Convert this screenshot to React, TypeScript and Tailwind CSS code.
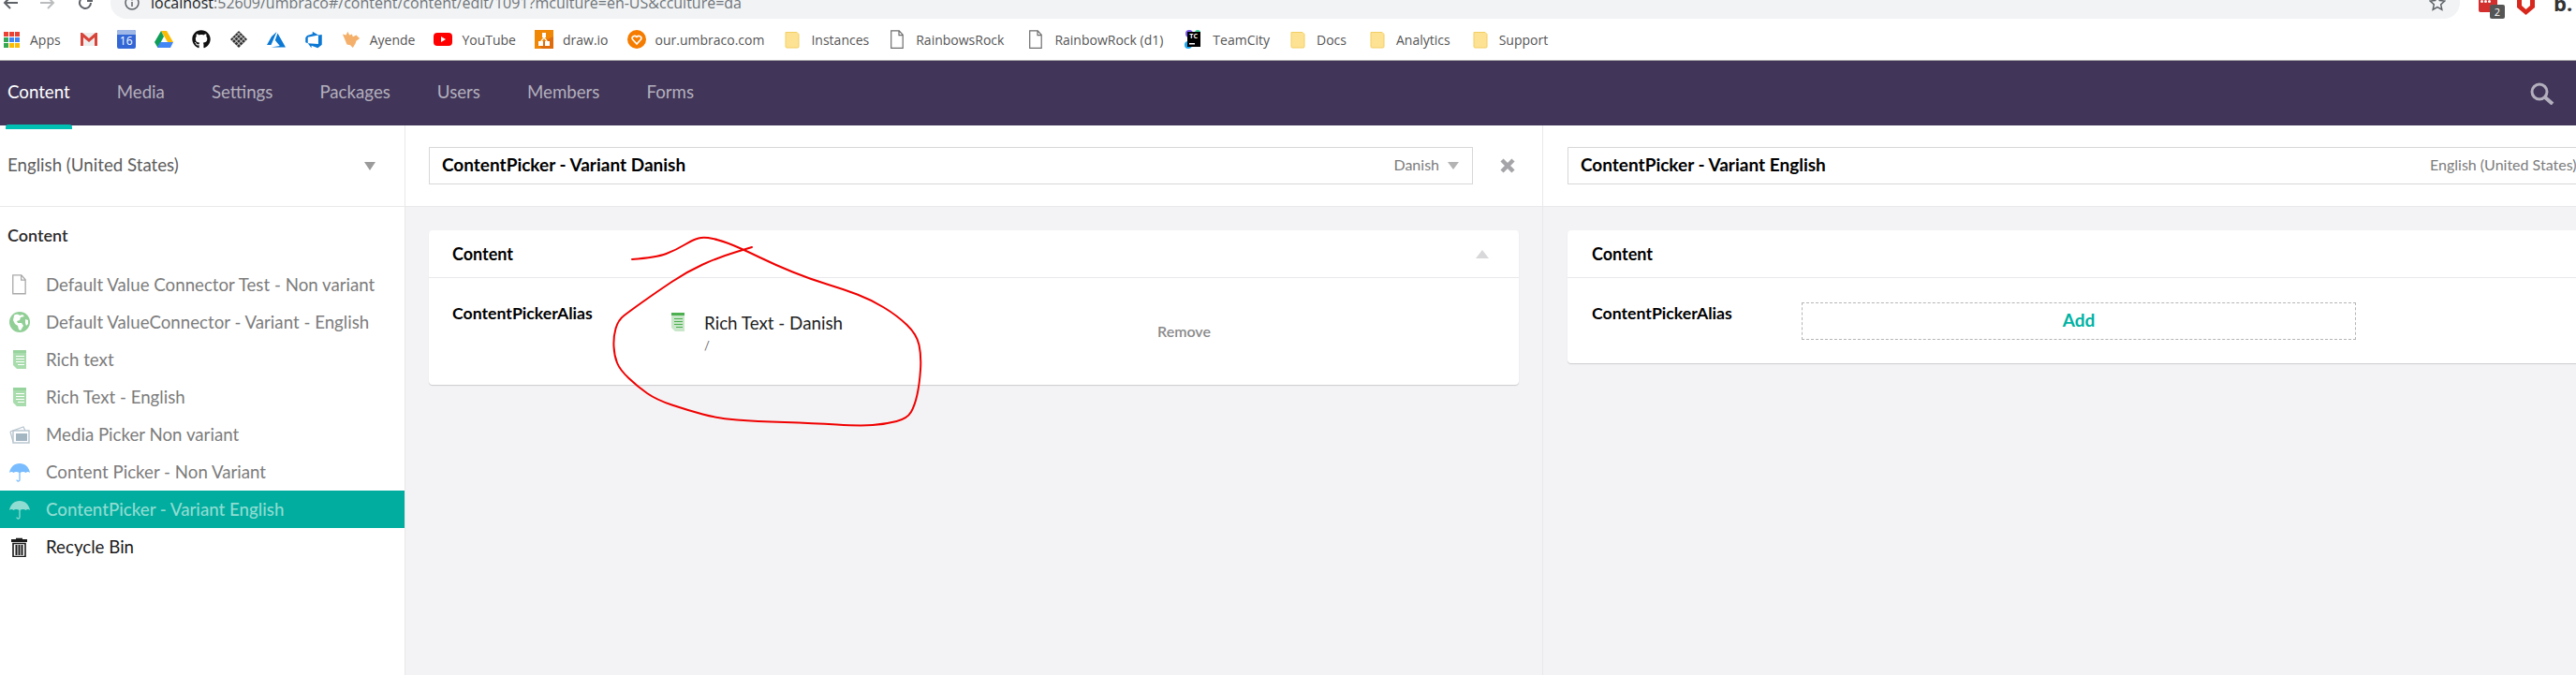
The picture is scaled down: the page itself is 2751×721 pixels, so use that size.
import React from 'react';
import { FaGithub } from 'react-icons/fa';
import { VscAzureDevops } from 'react-icons/vsc';

// Red hand drawn circle, points read off the screenshot
const scribble: [number, number][] = [
  [675, 277], [701, 275], [722, 267], [740, 256], [752, 253], [771, 257], [795, 267], [828, 283],
  [865, 298], [901, 309], [930, 320], [958, 337], [979, 357], [984, 380], [982, 410], [977, 433],
  [969, 447], [946, 453], [918, 455], [869, 452], [807, 450], [767, 447], [734, 438], [701, 427],
  [681, 413], [662, 395], [656, 380], [655, 360], [660, 342], [673, 332], [701, 312], [734, 290],
  [767, 275], [803, 264],
];

function smoothPath(pts: [number, number][]) {
  let d = `M${pts[0][0]} ${pts[0][1]}`;
  for (let i = 1; i < pts.length - 1; i++) {
    const mx = (pts[i][0] + pts[i + 1][0]) / 2;
    const my = (pts[i][1] + pts[i + 1][1]) / 2;
    d += ` Q${pts[i][0]} ${pts[i][1]} ${mx} ${my}`;
  }
  const last = pts[pts.length - 1];
  return d + ` L${last[0]} ${last[1]}`;
}

function AppsIcon() {
  const colors = ['#ea4335', '#ea4335', '#ea4335', '#34a853', '#4285f4', '#4285f4', '#34a853', '#fbbc05', '#fbbc05'];
  return (
    <svg width="17" height="17" viewBox="0 0 17 17">
      {colors.map((c, i) => (
        <rect key={i} x={(i % 3) * 6} y={Math.floor(i / 3) * 6} width="5" height="5" fill={c} />
      ))}
    </svg>
  );
}

function GmailIcon() {
  return (
    <svg width="20" height="16" viewBox="0 0 20 16">
      <rect x="1" y="1" width="18" height="14" fill="#eeeeee" />
      <path d="M1 15V1h2l7 6 7-6h2v14h-3V6l-6 5-6-5v9z" fill="#d9443a" />
    </svg>
  );
}

function CalendarIcon() {
  return (
    <div className="relative h-[20px] w-[20px] rounded-[2px] bg-[#3367d6]">
      <div className="h-[5px] rounded-t-[2px] bg-[#9fb8e6]" />
      <div className="text-center text-[12px] leading-[14px] text-white">16</div>
    </div>
  );
}

function DriveIcon() {
  return (
    <svg width="20" height="18" viewBox="0 0 20 18">
      <path d="M7 0h6l7 12h-6z" fill="#fbbc05" />
      <path d="M7 0l3 6-6.500 12L0 12z" fill="#0f9d58" />
      <path d="M6 12h14l-3 6H3z" fill="#4285f4" />
    </svg>
  );
}

function DiamondIcon() {
  return (
    <svg width="20" height="20" viewBox="0 0 20 20">
      <path d="M10 1l9 9-9 9-9-9z" fill="#333" />
      <path d="M6 5.500l9 9M3.500 8l9 9M8.500 3l9 9M14 5.500l-9 9M16.500 8l-9 9M11.500 3l-9 9" stroke="#eee" strokeWidth="1" />
    </svg>
  );
}

function AzureIcon() {
  return (
    <svg width="20" height="17" viewBox="0 0 20 17">
      <path d="M10.500 0L5 5 0 14h4.500zM11.500 1.500L8.800 9l5 6L4.500 16.500H20z" fill="#0a78d4" />
    </svg>
  );
}

function AyendeIcon() {
  return (
    <svg width="22" height="20" viewBox="0 0 22 20">
      <path d="M1 4l4 1 2-4 2 4 3-1 1 3 4-2 4 4-4 3-1 3-3 5-3-3-4-1-2-5z" fill="#f4b06a" />
    </svg>
  );
}

function YoutubeIcon() {
  return (
    <svg width="20" height="14" viewBox="0 0 20 14">
      <rect width="20" height="14" rx="4" fill="#f00" />
      <path d="M8 4l5 3-5 3z" fill="#fff" />
    </svg>
  );
}

function DrawioIcon() {
  return (
    <svg width="20" height="20" viewBox="0 0 20 20">
      <rect width="20" height="20" fill="#f08705" />
      <path d="M20 7v13H8L3 15z" fill="#df6c0c" />
      <path d="M8 3h4v5h-1.200l3 4H16v5h-5v-5h1.200L10 9l-2.200 3H9v5H4v-5h2.200l3-4H8z" fill="#fff" />
    </svg>
  );
}

function UmbracoIcon() {
  return (
    <svg width="20" height="20" viewBox="0 0 20 20">
      <circle cx="10" cy="10" r="10" fill="#f57c00" />
      <path d="M10 15L5.500 10C4 7.500 7.500 5 10 7.500 12.500 5 16 7.500 14.500 10z" fill="none" stroke="#fff" strokeWidth="1.600" />
    </svg>
  );
}

function FolderIcon() {
  return (
    <svg width="16" height="19" viewBox="0 0 16 19">
      <path d="M1 1.500h12l2 2V17c0 .5-.5 1-1 1H2c-.5 0-1-.5-1-1z" fill="#fde293" stroke="#f3cf63" />
    </svg>
  );
}

function PageIcon({ stroke = '#6e6e6e', size = 14 }: { stroke?: string; size?: number }) {
  return (
    <svg width={size} height={size * 1.45} viewBox="0 0 14 20">
      <path d="M.7.7h8.500l4 4.500v14H.7zM9 .7v4.800h4.200" fill="#fff" stroke={stroke} strokeWidth="1.200" />
    </svg>
  );
}

function TeamCityIcon() {
  return (
    <div className="relative h-[20px] w-[20px]">
      <svg className="absolute inset-0" width="20" height="20" viewBox="0 0 20 20">
        <circle cx="5" cy="4" r="4" fill="#7b57e8" />
        <circle cx="14" cy="3" r="3" fill="#3bd19a" />
        <circle cx="4" cy="16" r="4" fill="#1ea8f0" />
        <rect x="3" y="2" width="14" height="16" fill="#000" />
        <rect x="5" y="14" width="6" height="1.500" fill="#fff" />
      </svg>
      <span className="absolute left-[5px] top-[3px] text-[7px] font-bold leading-[8px] text-white">TC</span>
    </div>
  );
}

function RichTextIcon({ body, top, line }: { body: string; top: string; line: string }) {
  return (
    <svg width="14" height="20" viewBox="0 0 14 20">
      <path d="M0 0h14v20H4l-4-4z" fill={body} />
      <rect width="14" height="3" fill={top} />
      <path d="M3 6.500h9M3 9.500h9M3 12.500h9M5 15.500h7" stroke={line} strokeWidth="1.200" />
    </svg>
  );
}

function GlobeIcon() {
  return (
    <svg width="22" height="22" viewBox="0 0 22 22">
      <circle cx="11" cy="11" r="11" fill="#91cf96" />
      <path d="M5 4c2-2 5-1 6 0l3-1 2 2-4 1-1 3-3 1 1 2 4 0 2 3-3 5-2-1-1-4-3-2-2-4z" fill="#fff" />
      <path d="M17 8l3 1 0 4-2 2-1-3z" fill="#fff" />
    </svg>
  );
}

function MediaIcon() {
  return (
    <svg width="22" height="20" viewBox="0 0 22 20">
      <path d="M1 7l14-5 2 4" fill="none" stroke="#b5c3cd" strokeWidth="1.200" />
      <path d="M1 7l3 11" fill="none" stroke="#b5c3cd" strokeWidth="1.200" />
      <rect x="4" y="6" width="17" height="13" fill="#fff" stroke="#b5c3cd" strokeWidth="1.400" />
      <rect x="7" y="9" width="12" height="8" fill="#a4b6c2" />
    </svg>
  );
}

function UmbrellaIcon({ color }: { color: string }) {
  return (
    <svg width="22" height="22" viewBox="0 0 22 22">
      <path d="M11 0.500V2C5 2 1 6 0 12c1.500-1.500 3-1.500 4.500 0C6 10.500 8 10.500 11 12c3-1.500 5-1.500 6.500 0 1.500-1.500 3-1.500 4.500 0C21 6 17 2 11 2z" fill={color} />
      <path d="M11 11v8.500c0 2 -3 2 -3 0" fill="none" stroke={color} strokeWidth="1.300" />
    </svg>
  );
}

function TrashIcon() {
  return (
    <svg width="17" height="21" viewBox="0 0 17 21">
      <path d="M5 2V.7h7V2h5v3H0V2z" fill="#1b1b1b" />
      <path d="M2 6.500h13V20.500H2z" fill="#fff" stroke="#1b1b1b" strokeWidth="1.600" />
      <path d="M5.500 8v11M8.500 8v11M11.500 8v11" stroke="#1b1b1b" strokeWidth="2" />
    </svg>
  );
}

function BrowserBar() {
  return (
    <div className="flex h-[20px] shrink-0 bg-white font-['Open_Sans',sans-serif]">
      <div className="-mt-[14px] flex h-[34px] shrink-0 items-center pl-[3px]">
        <svg width="16" height="16" viewBox="0 0 16 16" fill="none" stroke="#5f6368" strokeWidth="2">
          <path d="M16 8H2M8 2L2 8l6 6" />
        </svg>
        <svg className="ml-[24px]" width="16" height="16" viewBox="0 0 16 16" fill="none" stroke="#babcbe" strokeWidth="2">
          <path d="M0 8h14M8 2l6 6-6 6" />
        </svg>
        <svg className="ml-[24px]" width="16" height="16" viewBox="0 0 16 16" fill="none" stroke="#5f6368" strokeWidth="2">
          <path d="M14 8a6 6 0 1 1-2-4.500L15 6M15 1v5h-5" />
        </svg>
        <div className="ml-[19px] flex h-[34px] w-[2509px] items-center rounded-full bg-[#f1f3f4] pl-[15px]">
          <svg width="16" height="16" viewBox="0 0 16 16" fill="none" stroke="#5f6368" strokeWidth="1.500">
            <circle cx="8" cy="8" r="7" />
            <path d="M8 7v5M8 4v1.500" />
          </svg>
          <span className="ml-[12px] text-[16px] text-[#70757a]">
            <span className="text-[#202124]">localhost</span>:52609/umbraco#/content/content/edit/1091?mculture=en-US&amp;cculture=da
          </span>
          <svg className="ml-auto mr-[15px]" width="18" height="18" viewBox="0 0 18 18" fill="none" stroke="#5f6368" strokeWidth="1.500">
            <path d="M9 1.500l2.300 5 5.400.6-4 3.700 1.100 5.400L9 13.500l-4.800 2.700 1.100-5.400-4-3.700 5.400-.6z" />
          </svg>
        </div>
        <div className="relative ml-[20px] h-[34px] w-[20px]">
          <div className="absolute left-0 top-0 flex h-[27px] w-[20px] items-end gap-[1px] rounded-[2px] bg-[#d32f2f] pb-[10px] pl-[2px]">
            <div className="h-[3px] w-[3px] rounded-full bg-white" />
            <div className="h-[3px] w-[3px] rounded-full bg-white" />
            <div className="h-[3px] w-[3px] rounded-full bg-white" />
          </div>
          <div className="absolute left-[12px] top-[19px] flex h-[15px] w-[16px] items-center justify-center rounded-[2px] bg-[#555] text-[11px] leading-none text-white">2</div>
        </div>
        <svg className="ml-[21px]" width="19" height="26" viewBox="0 0 19 26">
          <path d="M0 0h19v18l-9.500 8L0 18z" fill="#d8271c" />
          <path d="M5 8h9v8l-4.500 4L5 16z" fill="#fff" />
        </svg>
        <span className="ml-[20px] text-[22px] font-bold leading-[34px] text-[#333]">b.</span>
      </div>
    </div>
  );
}

function Bookmark({ icon, label, className = '' }: { icon: React.ReactNode; label?: string; className?: string }) {
  return (
    <div className={`flex items-center gap-[10px] ${className}`}>
      <div className="flex w-[20px] items-center justify-center">{icon}</div>
      {label && <span>{label}</span>}
    </div>
  );
}

function BookmarksBar() {
  return (
    <div className="flex h-[45px] shrink-0 items-center gap-[20px] border-b border-[#a8a8a8] bg-white pl-[2px] font-['Open_Sans',sans-serif] text-[14px] text-[#555]">
      <Bookmark icon={<AppsIcon />} label="Apps" />
      <Bookmark icon={<GmailIcon />} />
      <Bookmark icon={<CalendarIcon />} />
      <Bookmark icon={<DriveIcon />} />
      <Bookmark icon={<FaGithub className="text-[20px] text-[#111]" />} />
      <Bookmark icon={<DiamondIcon />} />
      <Bookmark icon={<AzureIcon />} />
      <Bookmark icon={<VscAzureDevops className="text-[21px] text-[#0a78d4]" />} />
      <Bookmark icon={<AyendeIcon />} label="Ayende" />
      <Bookmark icon={<YoutubeIcon />} label="YouTube" />
      <Bookmark icon={<DrawioIcon />} label="draw.io" />
      <Bookmark icon={<UmbracoIcon />} label="our.umbraco.com" />
      <Bookmark icon={<FolderIcon />} label="Instances" />
      <Bookmark icon={<PageIcon />} label="RainbowsRock" />
      <Bookmark icon={<PageIcon />} label="RainbowRock (d1)" className="ml-[4px]" />
      <Bookmark icon={<TeamCityIcon />} label="TeamCity" className="ml-[3px]" />
      <Bookmark icon={<FolderIcon />} label="Docs" />
      <Bookmark icon={<FolderIcon />} label="Analytics" className="ml-[3px]" />
      <Bookmark icon={<FolderIcon />} label="Support" className="ml-[2px]" />
    </div>
  );
}

const tabs = ['Content', 'Media', 'Settings', 'Packages', 'Users', 'Members', 'Forms'];

function TopNav() {
  return (
    <nav className="flex h-[69px] shrink-0 items-center justify-between bg-[#413659] pl-[8px] pr-[23px]">
      <div className="flex gap-[50px] pb-[2px] text-[18.700px]">
        {tabs.map((tab, i) => (
          <div key={tab} className={i === 0 ? 'relative text-white' : 'text-[#b3afbd]'}>
            {tab}
            {i === 0 && <div className="absolute -bottom-[25px] -left-[2px] -right-[2px] h-[5px] rounded-t-[3px] bg-[#00bfb3]" />}
          </div>
        ))}
      </div>
      <svg width="26" height="24" viewBox="0 0 26 24" fill="none" stroke="#b3afbd">
        <circle cx="10" cy="10" r="8" strokeWidth="3" />
        <path d="M16 16l8 7" strokeWidth="4" />
      </svg>
    </nav>
  );
}

const treeItems = [
  { label: 'Default Value Connector Test - Non variant', icon: <PageIcon stroke="#a9a9a9" size={15} />, textCls: 'text-[#7c7c7c]' },
  { label: 'Default ValueConnector - Variant - English', icon: <GlobeIcon />, textCls: 'text-[#7c7c7c]' },
  { label: 'Rich text', icon: <RichTextIcon body="#a9dcad" top="#97d39c" line="#fff" />, textCls: 'text-[#7c7c7c]' },
  { label: 'Rich Text - English', icon: <RichTextIcon body="#a9dcad" top="#97d39c" line="#fff" />, textCls: 'text-[#7c7c7c]' },
  { label: 'Media Picker Non variant', icon: <MediaIcon />, textCls: 'text-[#7c7c7c]' },
  { label: 'Content Picker - Non Variant', icon: <UmbrellaIcon color="#79bcff" />, textCls: 'text-[#7c7c7c]' },
  { label: 'ContentPicker - Variant English', icon: <UmbrellaIcon color="#8fdcd2" />, textCls: 'text-[#8fdcd2] font-medium', active: true },
  { label: 'Recycle Bin', icon: <TrashIcon />, textCls: 'text-[#1b1b1b]' },
];

function Sidebar() {
  return (
    <aside className="flex w-[433px] shrink-0 flex-col border-r border-[#e9e9eb] bg-white">
      <div className="flex h-[87px] shrink-0 items-center justify-between border-b border-[#e9e9eb] pl-[8px] pr-[31px] text-[18.700px] text-[#5c5c5c]">
        <span className="pb-[2px]">English (United States)</span>
        <div className="h-0 w-0 border-x-[6px] border-t-[9px] border-x-transparent border-t-[#9b9b9b]" />
      </div>
      <div className="flex h-[63px] shrink-0 items-center pb-[2px] pl-[8px] text-[18px] font-semibold text-[#2b2b2b]">Content</div>
      <div className="flex flex-col">
        {treeItems.map((item) => (
          <div key={item.label} className={`flex h-[40px] items-center gap-[16px] pl-[8px] text-[18.700px] ${item.active ? 'bg-[#00ad9f]' : ''}`}>
            <div className="flex w-[25px] items-center justify-center">{item.icon}</div>
            <span className={item.textCls}>{item.label}</span>
          </div>
        ))}
      </div>
    </aside>
  );
}

function Card({ children }: { children: React.ReactNode }) {
  return <div className="w-[1164px] shrink-0 rounded-[4px] bg-white shadow-[0_1px_1px_rgba(0,0,0,0.16)]">{children}</div>;
}

function DanishPane() {
  return (
    <section className="flex w-[1215px] shrink-0 flex-col border-r border-[#e9e9eb] bg-[#f3f3f5]">
      <div className="flex h-[87px] shrink-0 items-center border-b border-[#e9e9eb] bg-white pl-[25px]">
        <div className="flex h-[40px] w-[1115px] items-center justify-between border border-[#d8d7d9] pl-[13px] pr-[14px]">
          <span className="pb-[2px] text-[19px] font-bold text-black">ContentPicker - Variant Danish</span>
          <div className="flex items-center gap-[9px] text-[16px] text-[#7c7c7c]">
            <span className="pb-[2px]">Danish</span>
            <div className="h-0 w-0 border-x-[6px] border-t-[8px] border-x-transparent border-t-[#b3b3b3]" />
          </div>
        </div>
        <svg className="ml-[29px]" width="16" height="16" viewBox="0 0 16 16" stroke="#a5a5a9" strokeWidth="4.500">
          <path d="M2 2l12 12M14 2L2 14" />
        </svg>
      </div>
      <div className="px-[25px] pt-[25px]">
        <Card>
          <div className="flex h-[51px] items-center justify-between border-b border-[#e9e9eb] pl-[25px] pr-[32px]">
            <span className="text-[18px] font-bold text-black">Content</span>
            <div className="h-0 w-0 border-x-[7px] border-b-[9px] border-x-transparent border-b-[#d8d7d9]" />
          </div>
          <div className="flex pb-[25px] pl-[25px] pt-[26px]">
            <div className="w-[225px] text-[17.700px] font-bold leading-[24px] text-black">ContentPickerAlias</div>
            <div className="flex h-[63px] w-[592px] items-center justify-between pl-[9px] pr-[7px]">
              <div className="flex gap-[21px] self-start pt-[11px]">
                <RichTextIcon body="#c8e6c9" top="#4caf50" line="#4caf50" />
                <div className="text-[18.800px] leading-[22px] text-[#222]">
                  Rich Text - Danish
                  <div className="mt-[2px] text-[13px] text-[#666]">/</div>
                </div>
              </div>
              <span className="pb-[2px] text-[16px] font-semibold text-[#8a8a8a]">Remove</span>
            </div>
          </div>
        </Card>
      </div>
    </section>
  );
}

function EnglishPane() {
  return (
    <section className="flex w-[1164px] shrink-0 flex-col bg-[#f3f3f5] pl-[26px]">
      <div className="-ml-[26px] flex h-[87px] shrink-0 items-center border-b border-[#e9e9eb] bg-white pl-[26px]">
        <div className="flex h-[40px] w-[1200px] shrink-0 items-center border border-[#d8d7d9] pl-[13px]">
          <span className="w-[907px] pb-[2px] text-[19px] font-bold text-black">ContentPicker - Variant English</span>
          <span className="pb-[2px] text-[16px] text-[#7c7c7c]">English (United States)</span>
        </div>
      </div>
      <div className="pt-[25px]">
        <Card>
          <div className="flex h-[51px] items-center border-b border-[#e9e9eb] pl-[26px]">
            <span className="text-[18px] font-bold text-black">Content</span>
          </div>
          <div className="flex pb-[25px] pl-[26px] pt-[26px]">
            <div className="w-[224px] text-[17.700px] font-bold leading-[24px] text-black">ContentPickerAlias</div>
            <div className="flex h-[40px] w-[592px] items-center justify-center border border-dashed border-[#b5b5b5] pb-[2px] text-[19px] font-bold text-[#00b3a4]">Add</div>
          </div>
        </Card>
      </div>
    </section>
  );
}

export default function App() {
  return (
    <div className="relative flex h-[721px] w-full flex-col overflow-hidden bg-white font-['Lato',sans-serif]">
      <BrowserBar />
      <BookmarksBar />
      <TopNav />
      <div className="flex min-h-0 flex-1">
        <Sidebar />
        <DanishPane />
        <EnglishPane />
      </div>
      <svg className="pointer-events-none absolute left-0 top-0" width="2751" height="721" viewBox="0 0 2751 721" fill="none">
        <path d={smoothPath(scribble)} stroke="#f00000" strokeWidth="2" strokeLinecap="round" />
      </svg>
    </div>
  );
}
